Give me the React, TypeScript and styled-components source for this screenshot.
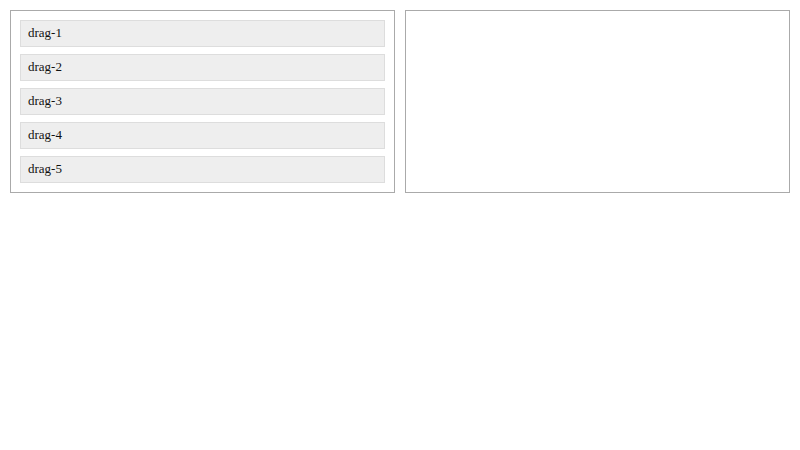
import React from "react";
import styled, { createGlobalStyle } from "styled-components";

const Global = createGlobalStyle`
  html, body { margin: 0; padding: 0; background: #fff; }
  body { font-family: "Liberation Serif", "Times New Roman", serif; }
`;

const Wrap = styled.div`
  display: flex;
  gap: 10px;
  padding: 10px;
`;

const Panel = styled.div`
  box-sizing: border-box;
  width: 385px;
  height: 182.5px;
  border: 1px solid #aaa;
  padding: 9px 9px 8px 9px;
  display: flex;
  flex-direction: column;
  gap: 7px;
`;

const Item = styled.div`
  box-sizing: border-box;
  height: 27px;
  border: 1px solid #ddd;
  background: #eee;
  padding: 0 8px 1px 7px;
  display: flex;
  align-items: center;
  font-size: 13px;
  color: #111;
`;

const items = ["drag-1", "drag-2", "drag-3", "drag-4", "drag-5"];

export default function App() {
  return (
    <>
      <Global />
      <Wrap>
        <Panel>
          {items.map((t) => (
            <Item key={t}>{t}</Item>
          ))}
        </Panel>
        <Panel />
      </Wrap>
    </>
  );
}
